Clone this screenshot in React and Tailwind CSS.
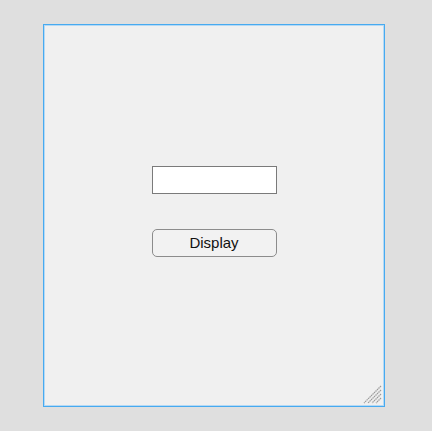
export default function App() {
  return (
    <div className="w-[432px] h-[431px] bg-[#dfdfdf] pt-[24px] pl-[43px]" style={{ fontFamily: '"Liberation Sans", Arial, sans-serif' }}>
      <div className="relative w-[342px] h-[383px] border border-[#47aaf0] bg-[#f0f0f0]">
        <div className="w-full h-full border border-[#b4d9f5] flex flex-col items-center pt-[140px]">
          <div className="w-[125px] h-[28px] border border-[#7a7a7a] bg-white" />
          <button className="mt-[35px] w-[125px] h-[28px] rounded-[5px] border border-[#8c8c8c] bg-[#f2f2f2] text-[15px] text-[#111] flex items-center justify-center">
            Display
          </button>
        </div>
        <svg className="absolute right-[2px] bottom-[2px]" width="20" height="20" viewBox="0 0 20 20">
          <g stroke="#9a9a9a" strokeWidth="1.2" strokeDasharray="1.5 0.6">
            <line x1="19" y1="2" x2="2" y2="19" />
            <line x1="19" y1="6" x2="6" y2="19" />
            <line x1="19" y1="10" x2="10" y2="19" />
            <line x1="19" y1="14" x2="14" y2="19" />
          </g>
        </svg>
      </div>
    </div>
  );
}
